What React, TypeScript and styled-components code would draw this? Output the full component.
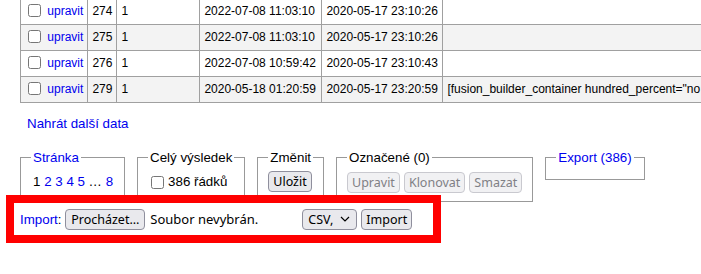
import { FC } from "react";
import styled, { createGlobalStyle } from "styled-components";

const GlobalStyle = createGlobalStyle`
html, body {
margin: 0;
padding: 0;
background: #fff;
overflow: hidden;
}
body {
font-family: "Liberation Sans", Arial, sans-serif;
font-size: 13.33px;
color: #000;
}
a {
color: #0000ee;
text-decoration: none;
}
`;

const Page = styled.div`
width: 701px;
height: 274px;
overflow: hidden;
`;

const TableWrap = styled.div`
margin-top: -2px;
padding-left: 20px;
overflow: hidden;
`;

const Table = styled.table`
border-collapse: collapse;
font-size: 12px;
white-space: nowrap;
width: max-content;
`;

const Row = styled.tr<{ $odd?: boolean }>`
background: ${(p) => (p.$odd ? "#f3f3f3" : "#fff")};
`;

const Cell = styled.td<{ $w?: number }>`
border: 1px solid #a0a0a0;
padding: 5px 4px;
line-height: 15px;
vertical-align: middle;
${(p) => (p.$w ? `width: ${p.$w}px;` : "")}
`;

const RowCheck = styled.input`
margin: 0 3px 0 3px;
width: 13px;
height: 13px;
vertical-align: -2px;
`;

const MoreLink = styled.a`
display: inline-block;
margin: 13px 0 0 27px;
line-height: 16px;
`;

const Toolbar = styled.div`
display: flex;
align-items: flex-start;
gap: 12px;
margin: 18px 0 0 20px;
`;

const Box = styled.fieldset`
margin: 0;
padding: 6px 10px 8px;
border: 1px solid #999;
min-width: 0;
`;

const Legend = styled.legend`
padding: 0 2px;
line-height: 15px;
`;

const Pages = styled.div`
padding: 0 1px 0 2px;
line-height: 18px;
margin-top: 2px;
`;

const Label = styled.label`
display: flex;
align-items: center;
gap: 4px;
line-height: 18px;
margin: 2px 0 0 3px;
`;

const Check = styled.input`
margin: 0;
width: 13px;
height: 13px;
`;

const Button = styled.button<{ $off?: boolean; $pad?: number }>`
font-family: "Noto Sans", "Open Sans", sans-serif;
font-size: 12.5px;
line-height: 17px;
padding: 1px ${(p) => p.$pad ?? 4}px;
border-radius: 4px;
border: 1px solid ${(p) => (p.$off ? "#c9c9cf" : "#8f8f9d")};
background: ${(p) => (p.$off ? "#f1f1f3" : "#e9e9ed")};
color: ${(p) => (p.$off ? "#808085" : "#000")};
margin: 0;
`;

const Buttons = styled.div`
display: flex;
gap: 4px;
margin-top: 1px;
`;

const ImportForm = styled.form`
display: flex;
align-items: center;
box-sizing: border-box;
width: 419px;
height: 32px;
margin: 1px 0 0 14px;
padding: 0 6px;
outline: 8px solid #ff0000;
`;

const FileName = styled.span`
font-family: "Noto Sans", "Open Sans", sans-serif;
font-size: 13px;
margin-left: 5px;
width: 152px;
`;

const Select = styled.div`
display: flex;
align-items: center;
justify-content: space-between;
box-sizing: border-box;
width: 55px;
height: 21px;
padding: 0 6px 0 5px;
border: 1px solid #8f8f9d;
border-radius: 4px;
background: #e9e9ed;
font-family: "Noto Sans", "Open Sans", sans-serif;
font-size: 12.5px;
margin-right: 4px;
`;

const rows = [
  { id: 274, a: "2022-07-08 11:03:10", b: "2020-05-17 23:10:26", text: "" },
  { id: 275, a: "2022-07-08 11:03:10", b: "2020-05-17 23:10:26", text: "" },
  { id: 276, a: "2022-07-08 10:59:42", b: "2020-05-17 23:10:43", text: "" },
  {
    id: 279,
    a: "2020-05-18 01:20:59",
    b: "2020-05-17 23:20:59",
    text: '[fusion_builder_container hundred_percent="no',
  },
];

const App: FC = () => {
  return (
    <Page>
      <GlobalStyle />
      <TableWrap>
        <Table>
          <tbody>
            {rows.map((r, i) => (
              <Row key={r.id} $odd={i % 2 === 1}>
                <Cell>
                  <RowCheck type="checkbox" /> <a href="#">upravit</a>
                </Cell>
                <Cell>{r.id}</Cell>
                <Cell $w={74}>1</Cell>
                <Cell $w={113}>{r.a}</Cell>
                <Cell $w={112}>{r.b}</Cell>
                <Cell $w={400}>{r.text}</Cell>
              </Row>
            ))}
          </tbody>
        </Table>
      </TableWrap>

      <MoreLink href="#">Nahrát další data</MoreLink>

      <Toolbar>
        <Box>
          <Legend>
            <a href="#">Stránka</a>
          </Legend>
          <Pages>
            1 <a href="#">2</a> <a href="#">3</a> <a href="#">4</a> <a href="#">5</a> … <a href="#">8</a>
          </Pages>
        </Box>
        <Box>
          <Legend>Celý výsledek</Legend>
          <Label>
            <Check type="checkbox" />
            386 řádků
          </Label>
        </Box>
        <Box>
          <Legend>Změnit</Legend>
          <Button type="button">Uložit</Button>
        </Box>
        <Box>
          <Legend>Označené (0)</Legend>
          <Buttons>
            <Button type="button" $off disabled>Upravit</Button>
            <Button type="button" $off disabled>Klonovat</Button>
            <Button type="button" $off disabled>Smazat</Button>
          </Buttons>
        </Box>
        <Box>
          <Legend>
            <a href="#">Export (386)</a>
          </Legend>
        </Box>
      </Toolbar>

      <ImportForm onSubmit={(e) => e.preventDefault()}>
        <a href="#">Import</a>:&nbsp;
        <Button type="button" $pad={5}>Procházet…</Button>
        <FileName>Soubor nevybrán.</FileName>
        <Select>
          <span>CSV,</span>
          <svg width="10" height="6" viewBox="0 0 10 6">
            <path d="M1 1l4 4 4-4" fill="none" stroke="#000" strokeWidth="1.2" />
          </svg>
        </Select>
        <Button type="submit">Import</Button>
      </ImportForm>
    </Page>
  );
};

export default App;
